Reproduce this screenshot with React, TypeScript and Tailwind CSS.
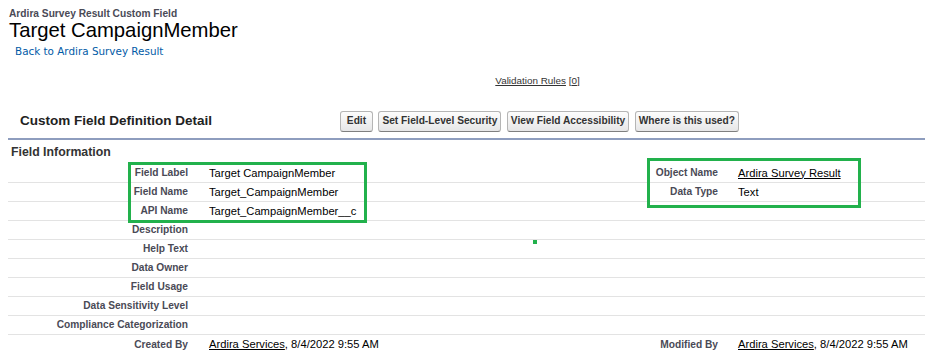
import type { ReactNode } from 'react'

// Salesforce Classic "Custom Field Definition Detail" page, with the green
// highlight boxes that were drawn on top of the screenshot.

type Row = { l1: string; v1?: ReactNode; l2?: string; v2?: ReactNode }

const rows: Row[] = [
  { l1: 'Field Label', v1: 'Target CampaignMember', l2: 'Object Name', v2: <a className="underline text-black">Ardira Survey Result</a> },
  { l1: 'Field Name', v1: 'Target_CampaignMember', l2: 'Data Type', v2: 'Text' },
  { l1: 'API Name', v1: 'Target_CampaignMember__c' },
  { l1: 'Description' },
  { l1: 'Help Text' },
  { l1: 'Data Owner' },
  { l1: 'Field Usage' },
  { l1: 'Data Sensitivity Level' },
  { l1: 'Compliance Categorization' },
  {
    l1: 'Created By',
    v1: <><a className="underline text-black">Ardira Services</a>, 8/4/2022 9:55 AM</>,
    l2: 'Modified By',
    v2: <><a className="underline text-black">Ardira Services</a>, 8/4/2022 9:55 AM</>,
  },
]

function Btn({ children }: { children: ReactNode }) {
  return (
    <button className="h-[21px] px-[3px] rounded-[3px] border border-[#b5b5b5] border-b-[#7f7f7f] bg-gradient-to-b from-[#fdfdfd] to-[#e6e6e7] text-[10.2px] font-bold text-[#333] leading-none whitespace-pre">
      {children}
    </button>
  )
}

export default function App() {
  return (
    <div className="relative w-[925px] h-[359px] overflow-hidden bg-white font-['Liberation_Sans',Arial,sans-serif] text-black">
      <div className="pl-[9px] pt-[8px]">
        <div className="text-[10.2px] leading-[11px] font-bold text-[#4a4a56]">Ardira Survey Result Custom Field</div>
        <h1 className="mt-[1px] text-[20.3px] leading-[20px] font-normal">Target CampaignMember</h1>
        <div className="mt-[5px] pl-[6px] h-[12px] leading-[12px] text-[10.4px] text-[#015ba7] font-['DejaVu_Sans',Verdana,sans-serif]">
          Back to Ardira Survey Result
        </div>
      </div>

      <div className="mt-[18px] h-[12px] leading-[12px] text-center pl-[150px] text-[9.9px] text-[#333]">
        <span className="underline">Validation Rules</span> [<span className="underline">0</span>]
      </div>

      <div className="pl-[8px] mt-[18px]">
        <div className="flex items-center h-[35px] border-b-2 border-[#8e9dbe]">
          <div className="w-[332px] pl-[12px] text-[13.5px] font-bold text-[#222]">Custom Field Definition Detail</div>
          <div className="flex gap-[5.5px]">
            <Btn>{'\u00a0Edit\u00a0'}</Btn>
            <Btn>Set Field-Level Security</Btn>
            <Btn>View Field Accessibility</Btn>
            <Btn>Where is this used?</Btn>
          </div>
        </div>

        <div className="h-[24px] flex items-center pl-[3px] text-[12.3px] font-bold text-[#333]">Field Information</div>

        {rows.map((r, i) => (
          <div key={i} className={`flex h-[19px] items-center ${i < rows.length - 1 ? 'border-b border-[#e3e3e3]' : ''}`}>
            <div className="w-[190px] pr-[10px] text-right text-[10.2px] font-bold text-[#4a4a56] whitespace-nowrap">{r.l1}</div>
            <div className="w-[340px] pl-[11px] text-[11.2px] whitespace-nowrap">{r.v1}</div>
            <div className="w-[190px] pr-[10px] text-right text-[10.2px] font-bold text-[#4a4a56] whitespace-nowrap">{r.l2}</div>
            <div className="flex-1 pl-[10px] text-[11.2px] whitespace-nowrap">{r.v2}</div>
          </div>
        ))}
      </div>

      {/* annotation overlays */}
      <div className="absolute left-[128px] top-[162px] w-[239px] h-[61px] border-[3px] border-[#22b14c]" />
      <div className="absolute left-[647px] top-[158px] w-[214px] h-[50px] border-[3px] border-[#22b14c]" />
      <div className="absolute left-[533px] top-[240px] w-[4px] h-[4px] bg-[#22b14c]" />
    </div>
  )
}
